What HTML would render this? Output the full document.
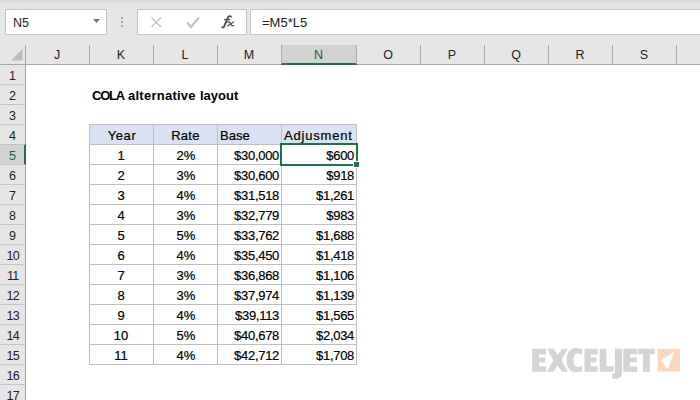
<!DOCTYPE html><html><head><meta charset="utf-8"><style>
html,body{margin:0;padding:0;}
body{width:700px;height:400px;overflow:hidden;position:relative;background:#fff;font-family:"Liberation Sans", sans-serif;}
div{position:absolute;box-sizing:border-box;}
.t{white-space:nowrap;line-height:1;}
.ch{font-size:12.5px;color:#222;top:49px;}
.rh{font-size:12.5px;color:#222;left:0;width:25px;text-align:center;}
.c{font-size:13px;color:#000;-webkit-text-stroke:0.2px #000;}
</style></head><body>
<div style="left:0;top:0;width:700px;height:64px;background:#e6e6e6"></div>
<div style="left:0;top:0;width:700px;height:4px;background:linear-gradient(#d6d6d6,#e6e6e6)"></div>
<div style="left:5px;top:9px;width:102px;height:26px;background:#fff;border:1px solid #c6c6c6"></div>
<div class="t" style="left:13px;top:17px;font-size:12.5px;color:#222">N5</div>
<svg style="position:absolute;left:93px;top:19px" width="8" height="5"><path d="M0 0H7L3.5 4Z" fill="#777"/></svg>
<div style="left:121px;top:17px;width:2px;height:2px;background:#a8a8a8"></div>
<div style="left:121px;top:21px;width:2px;height:2px;background:#a8a8a8"></div>
<div style="left:121px;top:25px;width:2px;height:2px;background:#a8a8a8"></div>
<div style="left:137px;top:9px;width:110px;height:26px;background:#fff;border:1px solid #c6c6c6"></div>
<svg style="position:absolute;left:150px;top:16px" width="13" height="13"><path d="M1.5 1.5L11 11M11 1.5L1.5 11" stroke="#c4c4c4" stroke-width="1.5" fill="none"/></svg>
<svg style="position:absolute;left:185px;top:16px" width="16" height="13"><path d="M2 6.5L6 11L14 1.5" stroke="#c4c4c4" stroke-width="2.2" fill="none"/></svg>
<svg style="position:absolute;left:0;top:0" width="260" height="40"><g fill="none" stroke="#505050" stroke-linecap="round"><path d="M231,16.6C230.2,15.9 228.8,15.9 228.1,17.1L224.2,26.4C223.7,27.6 222.9,27.8 222.2,27.3" stroke-width="1.9"/><path d="M224.6,19.7H229.6" stroke-width="1.3"/><path d="M228,22.2C229.2,21.7 229.9,22.3 230.5,23.4L231.4,25C231.9,25.9 232.7,26 233.6,25.5" stroke-width="1.3"/><path d="M233.6,22L227.8,25.8" stroke-width="1.3"/></g></svg>
<div style="left:250px;top:9px;width:460px;height:26px;background:#fff;border:1px solid #c6c6c6"></div>
<div class="t" style="left:262px;top:16px;font-size:13px;color:#222">=M5*L5</div>
<div style="left:0;top:64px;width:700px;height:1px;background:#a6a6a6"></div>
<div style="left:282px;top:45px;width:74px;height:18px;background:#d2d2d2"></div>
<div style="left:281px;top:63px;width:76px;height:2px;background:#217346"></div>
<div style="left:25px;top:45px;width:1px;height:19px;background:#ababab"></div>
<div class="t ch" style="left:25px;width:64px;text-align:center;color:#222">J</div>
<div style="left:89px;top:45px;width:1px;height:19px;background:#ababab"></div>
<div class="t ch" style="left:89px;width:64px;text-align:center;color:#222">K</div>
<div style="left:153px;top:45px;width:1px;height:19px;background:#ababab"></div>
<div class="t ch" style="left:153px;width:64px;text-align:center;color:#222">L</div>
<div style="left:217px;top:45px;width:1px;height:19px;background:#ababab"></div>
<div class="t ch" style="left:217px;width:64px;text-align:center;color:#222">M</div>
<div style="left:281px;top:45px;width:1px;height:19px;background:#ababab"></div>
<div class="t ch" style="left:281px;width:75px;text-align:center;color:#1e5e3a">N</div>
<div style="left:356px;top:45px;width:1px;height:19px;background:#ababab"></div>
<div class="t ch" style="left:356px;width:64px;text-align:center;color:#222">O</div>
<div style="left:420px;top:45px;width:1px;height:19px;background:#ababab"></div>
<div class="t ch" style="left:420px;width:64px;text-align:center;color:#222">P</div>
<div style="left:484px;top:45px;width:1px;height:19px;background:#ababab"></div>
<div class="t ch" style="left:484px;width:64px;text-align:center;color:#222">Q</div>
<div style="left:548px;top:45px;width:1px;height:19px;background:#ababab"></div>
<div class="t ch" style="left:548px;width:64px;text-align:center;color:#222">R</div>
<div style="left:612px;top:45px;width:1px;height:19px;background:#ababab"></div>
<div class="t ch" style="left:612px;width:64px;text-align:center;color:#222">S</div>
<div style="left:676px;top:45px;width:1px;height:19px;background:#ababab"></div>
<div class="t ch" style="left:676px;width:64px;text-align:center;color:#222">T</div>
<svg style="position:absolute;left:0;top:45px" width="25" height="19"><path d="M22.5 4V15.5H11Z" fill="#bcbcbc"/></svg>
<div style="left:0;top:65px;width:25px;height:335px;background:#e6e6e6"></div>
<div style="left:25px;top:45px;width:1px;height:355px;background:#a6a6a6"></div>
<div style="left:0;top:145px;width:24px;height:19px;background:#d2d2d2"></div>
<div style="left:24px;top:144px;width:2px;height:21px;background:#217346"></div>
<div style="left:0;top:84px;width:25px;height:1px;background:#c6c6c6"></div>
<div class="t rh" style="top:70px;color:#222">1</div>
<div style="left:0;top:104px;width:25px;height:1px;background:#c6c6c6"></div>
<div class="t rh" style="top:90px;color:#222">2</div>
<div style="left:0;top:124px;width:25px;height:1px;background:#c6c6c6"></div>
<div class="t rh" style="top:110px;color:#222">3</div>
<div style="left:0;top:144px;width:25px;height:1px;background:#c6c6c6"></div>
<div class="t rh" style="top:130px;color:#222">4</div>
<div style="left:0;top:164px;width:25px;height:1px;background:#c6c6c6"></div>
<div class="t rh" style="top:150px;color:#1e5e3a">5</div>
<div style="left:0;top:184px;width:25px;height:1px;background:#c6c6c6"></div>
<div class="t rh" style="top:170px;color:#222">6</div>
<div style="left:0;top:204px;width:25px;height:1px;background:#c6c6c6"></div>
<div class="t rh" style="top:190px;color:#222">7</div>
<div style="left:0;top:224px;width:25px;height:1px;background:#c6c6c6"></div>
<div class="t rh" style="top:210px;color:#222">8</div>
<div style="left:0;top:244px;width:25px;height:1px;background:#c6c6c6"></div>
<div class="t rh" style="top:230px;color:#222">9</div>
<div style="left:0;top:264px;width:25px;height:1px;background:#c6c6c6"></div>
<div class="t rh" style="top:250px;color:#222;letter-spacing:-0.6px;text-indent:0.6px">10</div>
<div style="left:0;top:284px;width:25px;height:1px;background:#c6c6c6"></div>
<div class="t rh" style="top:270px;color:#222;letter-spacing:-0.6px;text-indent:0.6px">11</div>
<div style="left:0;top:304px;width:25px;height:1px;background:#c6c6c6"></div>
<div class="t rh" style="top:290px;color:#222;letter-spacing:-0.6px;text-indent:0.6px">12</div>
<div style="left:0;top:324px;width:25px;height:1px;background:#c6c6c6"></div>
<div class="t rh" style="top:310px;color:#222;letter-spacing:-0.6px;text-indent:0.6px">13</div>
<div style="left:0;top:344px;width:25px;height:1px;background:#c6c6c6"></div>
<div class="t rh" style="top:330px;color:#222;letter-spacing:-0.6px;text-indent:0.6px">14</div>
<div style="left:0;top:364px;width:25px;height:1px;background:#c6c6c6"></div>
<div class="t rh" style="top:350px;color:#222;letter-spacing:-0.6px;text-indent:0.6px">15</div>
<div style="left:0;top:384px;width:25px;height:1px;background:#c6c6c6"></div>
<div class="t rh" style="top:370px;color:#222;letter-spacing:-0.6px;text-indent:0.6px">16</div>
<div style="left:0;top:404px;width:25px;height:1px;background:#c6c6c6"></div>
<div class="t rh" style="top:390px;color:#222;letter-spacing:-0.6px;text-indent:0.6px">17</div>
<div class="t c" style="left:92px;top:89px;-webkit-text-stroke:0;font-weight:bold;letter-spacing:-1.2px">COLA</div>
<div class="t c" style="left:128px;top:89px;-webkit-text-stroke:0;font-weight:bold;letter-spacing:0.25px">alternative</div>
<div class="t c" style="left:200px;top:89px;-webkit-text-stroke:0;font-weight:bold">layout</div>
<div style="left:89px;top:124px;width:268px;height:21px;background:#d9e1f2"></div>
<div style="left:89px;top:124px;width:1px;height:241px;background:#bfbfbf"></div>
<div style="left:153px;top:124px;width:1px;height:241px;background:#bfbfbf"></div>
<div style="left:217px;top:124px;width:1px;height:241px;background:#bfbfbf"></div>
<div style="left:281px;top:124px;width:1px;height:241px;background:#bfbfbf"></div>
<div style="left:356px;top:124px;width:1px;height:241px;background:#bfbfbf"></div>
<div style="left:89px;top:124px;width:268px;height:1px;background:#bfbfbf"></div>
<div style="left:89px;top:144px;width:268px;height:1px;background:#bfbfbf"></div>
<div style="left:89px;top:164px;width:268px;height:1px;background:#bfbfbf"></div>
<div style="left:89px;top:184px;width:268px;height:1px;background:#bfbfbf"></div>
<div style="left:89px;top:204px;width:268px;height:1px;background:#bfbfbf"></div>
<div style="left:89px;top:224px;width:268px;height:1px;background:#bfbfbf"></div>
<div style="left:89px;top:244px;width:268px;height:1px;background:#bfbfbf"></div>
<div style="left:89px;top:264px;width:268px;height:1px;background:#bfbfbf"></div>
<div style="left:89px;top:284px;width:268px;height:1px;background:#bfbfbf"></div>
<div style="left:89px;top:304px;width:268px;height:1px;background:#bfbfbf"></div>
<div style="left:89px;top:324px;width:268px;height:1px;background:#bfbfbf"></div>
<div style="left:89px;top:344px;width:268px;height:1px;background:#bfbfbf"></div>
<div style="left:89px;top:364px;width:268px;height:1px;background:#bfbfbf"></div>
<div class="t c" style="left:89px;width:64px;text-align:center;letter-spacing:0.6px;text-indent:2px;top:129px">Year</div>
<div class="t c" style="left:153px;width:64px;text-align:center;letter-spacing:0.3px;text-indent:1px;top:129px">Rate</div>
<div class="t c" style="left:220px;top:129px">Base</div>
<div class="t c" style="left:284px;top:129px;letter-spacing:0.8px">Adjusment</div>
<div class="t c" style="left:89px;width:64px;text-align:center;top:149px">1</div>
<div class="t c" style="left:154px;width:64px;text-align:center;top:149px">2%</div>
<div class="t c" style="left:217px;width:62px;text-align:right;letter-spacing:-0.3px;top:149px">$30,000</div>
<div class="t c" style="left:281px;width:73px;text-align:right;letter-spacing:-0.3px;top:149px">$600</div>
<div class="t c" style="left:89px;width:64px;text-align:center;top:169px">2</div>
<div class="t c" style="left:154px;width:64px;text-align:center;top:169px">3%</div>
<div class="t c" style="left:217px;width:62px;text-align:right;letter-spacing:-0.3px;top:169px">$30,600</div>
<div class="t c" style="left:281px;width:73px;text-align:right;letter-spacing:-0.3px;top:169px">$918</div>
<div class="t c" style="left:89px;width:64px;text-align:center;top:189px">3</div>
<div class="t c" style="left:154px;width:64px;text-align:center;top:189px">4%</div>
<div class="t c" style="left:217px;width:62px;text-align:right;letter-spacing:-0.3px;top:189px">$31,518</div>
<div class="t c" style="left:281px;width:73px;text-align:right;letter-spacing:-0.3px;top:189px">$1,261</div>
<div class="t c" style="left:89px;width:64px;text-align:center;top:209px">4</div>
<div class="t c" style="left:154px;width:64px;text-align:center;top:209px">3%</div>
<div class="t c" style="left:217px;width:62px;text-align:right;letter-spacing:-0.3px;top:209px">$32,779</div>
<div class="t c" style="left:281px;width:73px;text-align:right;letter-spacing:-0.3px;top:209px">$983</div>
<div class="t c" style="left:89px;width:64px;text-align:center;top:229px">5</div>
<div class="t c" style="left:154px;width:64px;text-align:center;top:229px">5%</div>
<div class="t c" style="left:217px;width:62px;text-align:right;letter-spacing:-0.3px;top:229px">$33,762</div>
<div class="t c" style="left:281px;width:73px;text-align:right;letter-spacing:-0.3px;top:229px">$1,688</div>
<div class="t c" style="left:89px;width:64px;text-align:center;top:249px">6</div>
<div class="t c" style="left:154px;width:64px;text-align:center;top:249px">4%</div>
<div class="t c" style="left:217px;width:62px;text-align:right;letter-spacing:-0.3px;top:249px">$35,450</div>
<div class="t c" style="left:281px;width:73px;text-align:right;letter-spacing:-0.3px;top:249px">$1,418</div>
<div class="t c" style="left:89px;width:64px;text-align:center;top:269px">7</div>
<div class="t c" style="left:154px;width:64px;text-align:center;top:269px">3%</div>
<div class="t c" style="left:217px;width:62px;text-align:right;letter-spacing:-0.3px;top:269px">$36,868</div>
<div class="t c" style="left:281px;width:73px;text-align:right;letter-spacing:-0.3px;top:269px">$1,106</div>
<div class="t c" style="left:89px;width:64px;text-align:center;top:289px">8</div>
<div class="t c" style="left:154px;width:64px;text-align:center;top:289px">3%</div>
<div class="t c" style="left:217px;width:62px;text-align:right;letter-spacing:-0.3px;top:289px">$37,974</div>
<div class="t c" style="left:281px;width:73px;text-align:right;letter-spacing:-0.3px;top:289px">$1,139</div>
<div class="t c" style="left:89px;width:64px;text-align:center;top:309px">9</div>
<div class="t c" style="left:154px;width:64px;text-align:center;top:309px">4%</div>
<div class="t c" style="left:217px;width:62px;text-align:right;letter-spacing:-0.3px;top:309px">$39,113</div>
<div class="t c" style="left:281px;width:73px;text-align:right;letter-spacing:-0.3px;top:309px">$1,565</div>
<div class="t c" style="left:89px;width:64px;text-align:center;top:329px">10</div>
<div class="t c" style="left:154px;width:64px;text-align:center;top:329px">5%</div>
<div class="t c" style="left:217px;width:62px;text-align:right;letter-spacing:-0.3px;top:329px">$40,678</div>
<div class="t c" style="left:281px;width:73px;text-align:right;letter-spacing:-0.3px;top:329px">$2,034</div>
<div class="t c" style="left:89px;width:64px;text-align:center;top:349px">11</div>
<div class="t c" style="left:154px;width:64px;text-align:center;top:349px">4%</div>
<div class="t c" style="left:217px;width:62px;text-align:right;letter-spacing:-0.3px;top:349px">$42,712</div>
<div class="t c" style="left:281px;width:73px;text-align:right;letter-spacing:-0.3px;top:349px">$1,708</div>
<div style="left:280px;top:143px;width:78px;height:23px;border:2px solid #217346"></div>
<div style="left:353px;top:161px;width:7px;height:7px;background:#fff"></div>
<div style="left:354px;top:162px;width:5px;height:5px;background:#217346"></div>
<svg style="position:absolute;left:0;top:0" width="700" height="400" viewBox="0 0 700 400">
<path d="M532.2,348.8H546V354.6H539V357.5H545.3V362.5H539V366.3H546.1V371.8H532.2Z" fill="#d3d4d4"/>
<path d="M547.2,348.8H553.8L557.7,355L561.9,348.8H567.8L561.6,360.3L568,371.8H562L557.5,365.5L553.5,371.8H546.8L553.2,360.3Z" fill="#d3d4d4"/>
<path d="M582,349.3C579.5,348.4 577.5,348.1 575.5,348.1C570,348.1 566.5,353 566.5,360.2C566.5,367.4 570,372.3 575.8,372.3C578,372.3 580,371.9 582,371.2L582,366.2C580.8,366.7 579.3,367 578,367C575.2,367 573.5,364.5 573.5,360.2C573.5,355.9 575.2,353.4 577.8,353.4C579.2,353.4 580.6,353.8 582,354.4Z" fill="#d3d4d4"/>
<path d="M584.5,348.8H597.7V354.6H590.6V357.5H596.5V362.5H590.6V366.3H597.7V371.8H584.5Z" fill="#d3d4d4"/>
<path d="M599.6,348.8H606.4V366.3H613.6V371.8H599.6Z" fill="#d3d4d4"/>
<path d="M614.9,348.8H622.1V372C622.1,376.5 619.5,379 615.5,379C614.3,379 613.2,378.8 612.2,378.5V373.3C612.8,373.5 613.3,373.6 613.8,373.6C614.6,373.6 614.9,373 614.9,372Z" fill="#d3d4d4"/>
<path d="M623.25,348.8H637.25V354.3H629.9V357.5H636.9V362.3H629.9V366.6H637.25V371.8H623.25Z" fill="#d3d4d4"/>
<path d="M638,348.8H654.8V354.3H649.9V371.8H642.9V354.3H638Z" fill="#d3d4d4"/>
<rect x="657.6" y="348.8" width="22.4" height="22.8" fill="#f9d8bf"/>
<path d="M660.6,360.4L674.4,351.6L667.6,369.2Z" fill="#fff"/>
</svg>
</body></html>
